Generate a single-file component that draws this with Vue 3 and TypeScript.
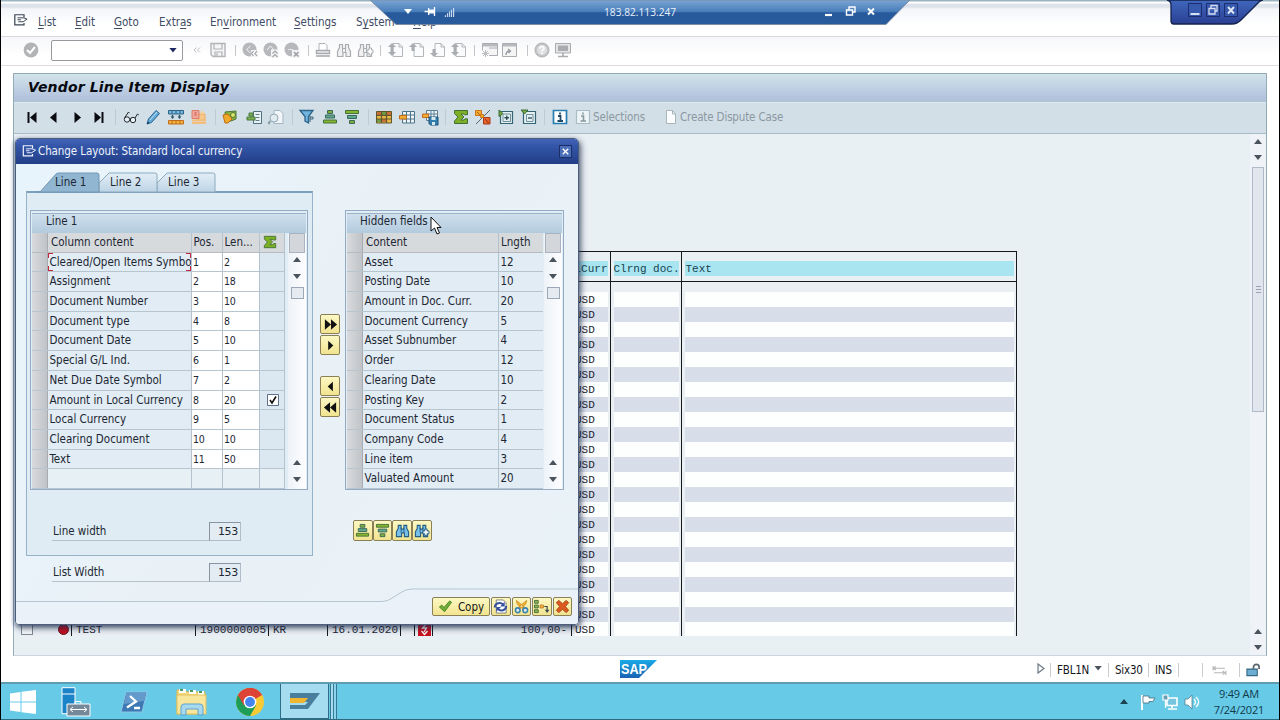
<script setup lang="ts">
interface MenuItem { before: string; key: string; after: string }
interface FieldRow { name: string; pos: string; len: string; sum?: boolean }

const menus: MenuItem[] = [
  { before: '', key: 'L', after: 'ist' },
  { before: '', key: 'E', after: 'dit' },
  { before: '', key: 'G', after: 'oto' },
  { before: 'Extr', key: 'a', after: 's' },
  { before: 'En', key: 'v', after: 'ironment' },
  { before: '', key: 'S', after: 'ettings' },
  { before: 'S', key: 'y', after: 'stem' },
  { before: '', key: 'H', after: 'elp' },
]

const page = '<path d="M5 1.5h6l3.500 3.500v9.500h-9.500z" fill="#fafbfc" stroke="#b4b6ba"/><path d="M11 1.500v3.500h3.500" fill="none" stroke="#b4b6ba"/>'
const upArrow = '<path d="M4 1l4 4H5.500v4h-3V5H0z" fill="#a9acb0"/>'
const downArrow = '<path d="M4 15l4-4H5.500V7h-3v4H0z" fill="#a9acb0"/>'
const upDown = '<path d="M4 1l4 4H5.500v5H8l-4 4-4-4h2.500V5H0z" fill="#a9acb0"/>'
const glass = (fill: string, stroke: string) =>
  `<path d="M1.500 14.500v-5l2-4v-3h3v3l.5 1h2l.5-1v-3h3v3l2 4v5h-4.500v-4h-3v4z" fill="${fill}" stroke="${stroke}" stroke-width="1.200"/><path d="M6.500 5v5m3-5v5" stroke="${stroke}"/>`
const ascending = '<path d="M5.500 1.500h5v3h-5z" fill="#7fae3c" stroke="#3c6a55"/><path d="M3.500 6h9v3h-9z" fill="#63a68e" stroke="#35695c"/><path d="M1.500 11h13v3h-13z" fill="#86b52f" stroke="#44703a"/>'
const descending = '<path d="M1.500 1.500h13v3h-13z" fill="#86b52f" stroke="#44703a"/><path d="M3.500 6.500h9v3h-9z" fill="#63a68e" stroke="#35695c"/><path d="M5.500 11.500h5v3h-5z" fill="#7fae3c" stroke="#3c6a55"/>'

const icons: Record<string, string> = {
  sep: '<path d="M8.500 3v11" stroke="#c3c7cc"/>',
  sep2: '<path d="M8.500 0v16" stroke="#bdcbd6"/>',
  ok: '<circle cx="8" cy="8" r="7.400" fill="#b1b3b5"/><path d="M4 8l3 3 5-6" fill="none" stroke="#fff" stroke-width="2"/>',
  chevrons: '<path d="M7.500 5.500L5 8l2.500 2.500m3.500-5L8.500 8l2.500 2.500" fill="none" stroke="#c0c2c7"/>',
  save: '<path d="M1 1.500h14v13H3l-2-2z" fill="#f5f5f6" stroke="#b2b4b8" stroke-width="1.400"/><path d="M4 2v5h8V2M5 14v-4h7v4M7 11v3" fill="none" stroke="#b2b4b8" stroke-width="1.200"/>',
  back: '<circle cx="7.500" cy="7.500" r="7" fill="#b6b8bb"/><path d="M8.500 4l-4 3.500 4 3.500" fill="none" stroke="#f4f4f4"/><path d="M9 8h7v7H9z" fill="#f4f4f4"/><path d="M11.500 9l-2 2.500 2 2.500m3.500-5l-2 2.500 2 2.500" fill="none" stroke="#9fa1a6" stroke-width="1.200"/>',
  exit: '<circle cx="7.500" cy="7.500" r="7" fill="#b6b8bb"/><path d="M4 8l3.500-4 3.500 4" fill="none" stroke="#f4f4f4"/><path d="M8 7.500h8V16H8z" fill="#f4f4f4"/><path d="M9.500 11.500l2.500-2.500 2.500 2.500m-5 3.500l2.500-2.500 2.500 2.500" fill="none" stroke="#9fa1a6" stroke-width="1.200"/>',
  cancel: '<circle cx="7.500" cy="7.500" r="7" fill="#b6b8bb"/><path d="M4 7.500h5" stroke="#e8e8e8"/><path d="M8 8h8v8H8z" fill="#f4f4f4"/><path d="M10 10l4.500 4.500m0-4.500L10 14.500" stroke="#9fa1a6" stroke-width="1.700"/>',
  print: '<path d="M4 8V1.500h6l2 2V8" fill="#fff" stroke="#b0b2b6"/><path d="M1.500 8.500h13v3h-13z" fill="#e9eaeb" stroke="#a8aaae" stroke-width="1.400"/><path d="M1 14h14" stroke="#a8aaae" stroke-width="1.600"/>',
  find: glass('#f0f0f1', '#aaadb1'),
  findNext: glass('#f0f0f1', '#aaadb1') + '<path d="M10 8h2V6h2.500v2h1.500v3h-1.500v2H12v-2h-2z" fill="#fff" stroke="#aaadb1"/>',
  first: page + upDown,
  prev: page + upArrow,
  next: page + downArrow,
  last: page + upDown,
  session: '<path d="M.5 1.500h15v12H7m-6.500-5v-7" fill="#f5f5f6" stroke="#a9acb0"/><path d="M1 2h14v2.500H1z" fill="#b7b9bd"/><path d="M7 6h8" stroke="#a9acb0"/><path d="M3.500 8v7M0 11.500h7M1 9l5 5m0-5l-5 5" stroke="#bbbdc0"/>',
  shortcut: '<path d="M.5 1.500h14v13H.5z" fill="#f5f5f6" stroke="#a9acb0"/><path d="M1 2h13v2.500H1z" fill="#b7b9bd"/><path d="M4 13c0-3 1-4 4-4M6 7l2.500 2L6.500 11" fill="none" stroke="#999ca2" stroke-width="1.300"/>',
  help: '<circle cx="8" cy="8" r="7" fill="#c2c4c6" stroke="#aeb0b4"/><circle cx="8" cy="8" r="5" fill="#dfe0e1"/><path d="M6 6.500c0-3 4.500-2.500 4 0-.3 1.300-2 1.300-2 3m0 1v1.500" fill="none" stroke="#fff" stroke-width="1.600"/>',
  monitor: '<path d="M.5 1.500h15v9.500H.5z" fill="#e4e5e6" stroke="#aaacb0"/><path d="M3 3.500h10V9H3z" fill="#a9abaf"/><path d="M8 11v3M3 14.500h10" stroke="#aaacb0" stroke-width="1.700"/>',
  toFirst: '<path d="M4.500 3v11" stroke="#0a0c12" stroke-width="2"/><path d="M12.500 3v11L6 8.500z" fill="#0a0c12"/>',
  toPrev: '<path d="M10.500 3v11L4 8.500z" fill="#0a0c12"/>',
  toNext: '<path d="M5.500 3v11L12 8.500z" fill="#0a0c12"/>',
  toLast: '<path d="M11.500 3v11" stroke="#0a0c12" stroke-width="2"/><path d="M3.500 3v11L10 8.500z" fill="#0a0c12"/>',
  glasses: '<circle cx="4" cy="10.500" r="2.700" fill="#e9f1f5" stroke="#20292f"/><circle cx="10" cy="11" r="2.700" fill="#e9f1f5" stroke="#20292f"/><path d="M1.500 9l4-6 .8 1.200M7 10.500l.6-1M12 9l2.500-4 1.300 1" fill="none" stroke="#20292f"/>',
  pencil: '<path d="M2 15l1.500-5L11 1.500l3.500 3L6.500 13.500z" fill="#62a9d8" stroke="#27638f"/><path d="M5 11l7-8" stroke="#c5e2f4"/><path d="M2 15l.8-2.500L4.500 14z" fill="#15354e"/>',
  detail: '<path d="M.5 1.500h15v3.500H.5z" fill="#7db7d8" stroke="#28638c"/><path d="M4 1.500V5m4-3.500V5m4-3.500V5" stroke="#28638c"/><path d="M4.500 6v3m7-3v3" stroke="#33576f" stroke-width="1.500"/><path d="M2.500 7.500h4l-2 2.500zm7 0h4l-2 2.500z" fill="#33576f"/><path d="M.5 11.500h15V15H.5z" fill="#f0b23c" stroke="#c26d1a"/><path d="M4 11.500V15m4-3.500V15m4-3.500V15" stroke="#c26d1a"/>',
  paste: '<path d="M6 5h8v6H6z" fill="#f6c98b" stroke="#f0ac60"/><path d="M1 1.500h7v8H1z" fill="#eda79c" stroke="#df7c6b"/><path d="M3.500 4h2M3.500 6h2" stroke="#c94f3a"/><path d="M1 11.500h14M1 14h14" stroke="#f3bd7c" stroke-width="2"/><path d="M11 1l3 4h-5z" fill="#f6ce97"/>',
  block: '<path d="M3 3l11-1v8l-5 2H4z" fill="#8bb63a" stroke="#4b7838"/><circle cx="11" cy="6" r="2.500" fill="#dbe46a" stroke="#4d7539"/><path d="M1 6l5-1 4 5-4 4H3z" fill="#f0a929" stroke="#bd6c15"/>',
  clip: '<path d="M7.500 2.500h8v12h-8z" fill="#eaf2f4" stroke="#51707f"/><path d="M9.500 5.500h4m-4 3h4m-4 3h4" stroke="#61808d"/><path d="M1 8h8v3H1zM3 4h4v3H3z" fill="#80b14b" stroke="#477842"/>',
  preview: '<path d="M6 1.500h6l3 3v10H6z" fill="#f1f5f7" stroke="#a4b7c1"/><circle cx="6" cy="9" r="4" fill="#dfebf1" stroke="#94a9b5"/><path d="M2 12l-1.500 3" stroke="#8298a4" stroke-width="2"/>',
  filter: '<path d="M1 1.500h13l-4.500 6v6.500L6 12V7.500z" fill="#70b5df" stroke="#2b6389" stroke-width="1.300"/><path d="M11 7v6m0-5h3v2h-3" fill="none" stroke="#37637c"/>',
  asc: ascending,
  desc: descending,
  grid: '<path d="M.5 2.500h15v11.500H.5z" fill="#e8b844" stroke="#61562e"/><path d="M1 3h4v3H1zm10 0h4v3h-4zM6 10h4v3H6z" fill="#cb7139"/><path d="M6 3h4v3H6zM1 10h4v3H1z" fill="#6f9e48"/><path d="M.5 6.300h15m-15 3.700h15m-10-7.500V14m5-11.500V14" stroke="#61562e" stroke-width="1.200"/>',
  grid2: '<path d="M3.500 2.500h12v11.500h-12z" fill="#eff5f7" stroke="#4d7489"/><path d="M3.500 6h12m-12 4h12m-8-7.500V14m4-11.500V14" stroke="#4d7489"/><path d="M.5 6.500h7v3.500h-7z" fill="#f0ad36" stroke="#c26a1b"/>',
  gridSave: '<path d="M4.500 1.500h11v10h-11z" fill="#eff5f7" stroke="#5b7f95"/><path d="M4.500 5h11m-11 3.500h11M9 1.500v10m3-10v10" stroke="#5b7f95"/><path d="M.5 5h6v3.500h-6z" fill="#f0ad36" stroke="#c26a1b"/><path d="M7 8h9v8H8.500L7 14.500z" fill="#317fae" stroke="#1b5276"/><path d="M9.500 8h4v3h-4zM10 13h3v3h-3z" fill="#d9e9f1"/>',
  sigma: '<path d="M1.500 1.500h13v4.200h-3L10.500 5H8l3 3-3.200 3H11l1-1.200h2.500v4.700h-13V12L5 8.100 1.500 4.500z" fill="#7eaf25" stroke="#3e6f36"/>',
  percent: '<path d="M.5 1.500h6v5h-6z" fill="#f3ad2e" stroke="#ca7318"/><path d="M2 3l3 3" stroke="#b85a16"/><path d="M1 15L15 1" stroke="#58666c"/><path d="M8.500 8.500h6.500V15H8.500z" fill="#e6672d" stroke="#a63816"/><path d="M10 10l3.500 4" stroke="#8c2810"/><path d="M5.500 5.500h3v3h-3z" fill="#f3ad2e" stroke="#ca7318"/>',
  plusBox: '<path d="M2.500 2.500h12v12h-12z" fill="#e4eff0" stroke="#356575" stroke-width="1.200"/><path d="M5 5h7.500v7.500H5z" fill="none" stroke="#6f929e"/><path d="M6.500 8.750h4.500M8.750 6.500v4.500" stroke="#284c5a" stroke-width="1.300"/><path d="M1 1l4 3.500-4 3z" fill="#76a93c" stroke="#3a6b3c"/>',
  minusBox: '<path d="M2.500 2.500h12v12h-12z" fill="#e4eff0" stroke="#356575" stroke-width="1.200"/><path d="M5.500 5.500h6.500v7H5.500z" fill="none" stroke="#6f929e"/><path d="M7 9h4" stroke="#284c5a" stroke-width="1.300"/><path d="M0 1h7L3.500 5z" fill="#76a93c" stroke="#3a6b3c"/>',
  info: '<path d="M1.500 1.500h13v13h-13z" fill="#fff" stroke="#267eaf" stroke-width="1.700"/><path d="M6 7h2.500v5m-3 0h5.500M8 3.500v2" fill="none" stroke="#214968" stroke-width="1.800"/>',
  infoGrey: '<path d="M1.500 1.500h13v13h-13z" fill="#eef4f6" stroke="#a9bcc5" stroke-width="1.200"/><path d="M6 7h2.500v5m-3 0h5.500M8 3.500v2" fill="none" stroke="#8798a1" stroke-width="1.600"/>',
  sheet: '<path d="M3.500 1.500h6l3 3.500v9.500h-9z" fill="#fbfcfd" stroke="#aab4bb"/><path d="M9.500 1.500V5h3" fill="none" stroke="#aab4bb"/>',
  window: '<path d="M12 5V2H1.500v11.500H12v-2" fill="none" stroke="currentColor" stroke-width="1.400"/><path d="M4.500 5.500h7L15.500 7 11 10H5.500M4.500 7.700h4" fill="none" stroke="currentColor" stroke-width="1.100"/>',
  dRight: '<path d="M2 2.500v11L8.500 8zM8.500 2.500v11L15 8z" fill="#111"/>',
  right: '<path d="M5.500 3v10L11 8z" fill="#111"/>',
  left: '<path d="M10.500 3v10L5 8z" fill="#111"/>',
  dLeft: '<path d="M14 2.500v11L7.500 8zM7.500 2.500v11L1 8z" fill="#111"/>',
  glassBlue: glass('#77bfe8', '#245e85'),
  glassPlus: glass('#77bfe8', '#245e85') + '<path d="M9.500 8.500h2v-2h2.500v2h2v3h-2v2h-2.500v-2h-2z" fill="#f0f6fa" stroke="#245e85"/>',
  tick: '<path d="M1.500 8.500l2.500-2L6.500 9l6-7 2 1.500-7.500 10z" fill="#71ae36" stroke="#488227"/>',
  refresh: '<path d="M3.500 1h7.500l3 3v11H3.500z" fill="#fff" stroke="#7b7e7b"/><path d="M2 9c0-5 6-6 9-3M14 7.500c0 5-6 6-9 3" fill="none" stroke="#36519d" stroke-width="2.200"/><path d="M12.500 3v5H7.500zM3.500 13.500v-5h5z" fill="#36519d"/>',
  scissors: '<path d="M2.500 1.500l1 4L9 10l2-1.500zM13.500 1.500l-1 4L7 10 5 8.500z" fill="#f4b832" stroke="#c7811d" stroke-width=".8"/><circle cx="4" cy="12" r="2.500" fill="#dcedf3" stroke="#3e83ac" stroke-width="1.700"/><circle cx="12" cy="12" r="2.500" fill="#dcedf3" stroke="#3e83ac" stroke-width="1.700"/>',
  tree: '<path d="M.5 1.500h4v3h-4zm0 5h4v3h-4zm0 5h4v3h-4z" fill="#91b94e" stroke="#446c3b"/><path d="M6.500 6.500H10v3H6.500z" fill="#f4bf49" stroke="#bf7928"/><path d="M11 8h3v5" fill="none" stroke="#3d4b50" stroke-width="1.300"/><path d="M11.500 11.500h5L14 15z" fill="#3d4b50"/>',
  cross: '<path d="M1.500 4L4 1.500 8 5l4-3.500L14.500 4 11 8l3.500 4-2.500 2.500L8 11l-4 3.500L1.500 12 5 8z" fill="#dc5a20" stroke="#a83b16"/>',
  xWhite: '<path d="M4 4l8 8m0-8l-8 8" stroke="#fff" stroke-width="2"/>',
}

const systemBar: string[] = ['save', 'sep', 'back', 'exit', 'cancel', 'sep', 'print', 'find', 'findNext', 'sep', 'first', 'prev', 'next', 'last', 'sep', 'session', 'shortcut', 'sep', 'help', 'monitor']
const appBar: string[] = ['toFirst', 'toPrev', 'toNext', 'toLast', 'sep2', 'glasses', 'pencil', 'detail', 'paste', 'sep2', 'block', 'clip', 'preview', 'sep2', 'filter', 'asc', 'desc', 'sep2', 'grid', 'grid2', 'gridSave', 'sep2', 'sigma', 'percent', 'plusBox', 'minusBox', 'sep2', 'info']

const shown: FieldRow[] = [
  { name: 'Cleared/Open Items Symbo', pos: '1', len: '2' },
  { name: 'Assignment', pos: '2', len: '18' },
  { name: 'Document Number', pos: '3', len: '10' },
  { name: 'Document type', pos: '4', len: '8' },
  { name: 'Document Date', pos: '5', len: '10' },
  { name: 'Special G/L Ind.', pos: '6', len: '1' },
  { name: 'Net Due Date Symbol', pos: '7', len: '2' },
  { name: 'Amount in Local Currency', pos: '8', len: '20', sum: true },
  { name: 'Local Currency', pos: '9', len: '5' },
  { name: 'Clearing Document', pos: '10', len: '10' },
  { name: 'Text', pos: '11', len: '50' },
  { name: '', pos: '', len: '' },
]

const hidden: [string, string][] = [
  ['Asset', '12'], ['Posting Date', '10'], ['Amount in Doc. Curr.', '20'], ['Document Currency', '5'],
  ['Asset Subnumber', '4'], ['Order', '12'], ['Clearing Date', '10'], ['Posting Key', '2'],
  ['Document Status', '1'], ['Company Code', '4'], ['Line item', '3'], ['Valuated Amount', '20'],
]
const rowCount = 23
</script>

<template>
  <div class="screen">
    <header class="menubar">
      <svg class="ic winicon" viewBox="0 0 16 16" v-html="icons.window" />
      <span v-for="m in menus" :key="m.key">{{ m.before }}<u>{{ m.key }}</u>{{ m.after }}</span>
    </header>

    <div class="sysbar">
      <svg class="ic" viewBox="0 0 16 16" v-html="icons.ok" />
      <div class="combo"><i class="tri-down navy" /></div>
      <svg class="ic" viewBox="0 0 16 16" v-html="icons.chevrons" />
      <svg v-for="(n, i) in systemBar" :key="i" class="ic" viewBox="0 0 16 16" v-html="icons[n]" />
    </div>

    <main class="work">
      <h1>Vendor Line Item Display</h1>
      <div class="appbar">
        <svg v-for="(n, i) in appBar" :key="i" class="ic" viewBox="0 0 16 16" v-html="icons[n]" />
        <span class="disabled"><svg class="ic" viewBox="0 0 16 16" v-html="icons.infoGrey" />Selections</span>
        <span class="disabled dispute"><svg class="ic" viewBox="0 0 16 16" v-html="icons.sheet" />Create Dispute Case</span>
      </div>
      <div class="content">
        <div class="list">
          <div class="lhead">
            <div class="lcell lead" />
            <div class="lcell"><b class="hl curr">LCurr</b></div>
            <div class="lcell"><b class="hl">Clrng doc.</b></div>
            <div class="lcell"><b class="hl text">Text</b></div>
          </div>
          <div class="lbody">
            <div v-for="r in rowCount" :key="r" class="lrow" :class="{ dark: r % 2 === 0 }">
              <div class="lcell lead">
                <template v-if="r === rowCount">
                  <i class="check" /><i class="dot" />
                  <span class="bar">TEST</span><span class="bar">1900000005</span><span class="bar">KR</span>
                  <span class="bar">16.01.2020</span><span class="bar" />
                  <span class="bar due"><svg viewBox="0 0 13 13"><path d="M0 0h13v13H0z" fill="#c9101f" /><path d="M8 1L4.500 5h4L6 9M3.500 8l3 3.500L9.500 8" fill="none" stroke="#fff" stroke-width="1.300" /></svg></span>
                  <span class="bar amount">100,00-</span>
                </template>
              </div>
              <div class="lcell"><span class="fill usd">USD</span></div>
              <div class="lcell"><span class="fill" /></div>
              <div class="lcell"><span class="fill" /></div>
            </div>
          </div>
        </div>
        <div class="scroll outer">
          <i class="tri-up" /><i class="tri-down" />
          <div class="thumb"><i v-for="n in 3" :key="n" class="grip"/></div>
          <span class="grow" />
          <i class="tri-up" /><i class="tri-down" />
        </div>
      </div>
    </main>

    <footer class="status">
      <svg class="sap" viewBox="0 0 37 18">
        <defs><linearGradient id="sapfill" x1="0" y1="0" x2="0" y2="1"><stop offset="0" stop-color="#1aaae6" /><stop offset="1" stop-color="#1a62b4" /></linearGradient></defs>
        <path d="M0 0h37L19 18H0z" fill="url(#sapfill)" />
        <text x="1" y="13.500" textLength="26" lengthAdjust="spacingAndGlyphs" font-family="Liberation Sans, sans-serif" font-weight="bold" font-size="14" fill="#fff">SAP</text>
      </svg>
      <div class="fields">
        <svg class="play" viewBox="0 0 8 11"><path d="M1 1l6 4.500L1 10z" fill="#fff" stroke="#6e7a86" stroke-width="1.200" /></svg>
        <span class="tcode">FBL1N<i class="tri-down" /></span>
        <span class="sys">Six30</span><span class="ins">INS</span><span class="gap" />
        <span class="swap"><svg viewBox="0 0 16 12"><path d="M1 1v5m1-2.500h12M4 1.500l-2.500 2L4 5.500M15 6v5M2 8.500h12m-2.500-2l2.500 2-2.500 2" fill="none" stroke="#b6b8bb" stroke-width="1.200" /></svg></span>
        <span class="lock"><svg viewBox="0 0 16 14"><path d="M8 6V4c0-4 6-4 6 0v2" fill="none" stroke="#5a646c" stroke-width="1.800" /><path d="M1 6h11v7H1z" fill="#6caed3" stroke="#386783" stroke-width="1.200" /></svg></span>
      </div>
    </footer>

    <nav class="taskbar">
      <svg class="start" viewBox="0 0 26 24"><path d="M0 3.500L10.500 2v9.500H0zM11.500 1.800L26 0v11.500H11.500zM0 12.500h10.500V22L0 20.500zM11.500 12.500H26V24l-14.500-1.800z" fill="#fff" /></svg>
      <svg class="server" viewBox="0 0 30 30"><path d="M1 .7h13v26H1z" fill="#1b83c8" stroke="#fff" /><path d="M1 7h13" stroke="#fff" /><path d="M6 17h23v12H6z" fill="#74889a" stroke="#fff" /><path d="M14 17v-2.500h6V17M9 22.500h17m-3-2.500l3 2.500-3 2.500M12 20l-3 2.500 3 2.500" fill="none" stroke="#fff" /></svg>
      <svg class="shell" viewBox="0 0 28 22"><path d="M6 1h21l-5 20H1z" fill="#3c78b4" stroke="#90c5e6" /><path d="M6.500 2H26l-2 8-20 3z" fill="#639acb" /><path d="M10 5l6 5.500-9 6M14 17h6" fill="none" stroke="#fff" stroke-width="2.300" /></svg>
      <svg class="files" viewBox="0 0 32 28"><path d="M1 2h8l2 2h18v22H1z" fill="#f4d97d" stroke="#dcb74e" /><path d="M3 1h7v4H3zm10 1h7v4h-7zm9 1h6v4h-6z" fill="#fff" /><path d="M4 2h3m7 1h3m6 1h3" stroke="#4a9a59" stroke-width="2" /><path d="M1 7h29v19H1z" fill="#f8e69c" stroke="#e0c261" /><path d="M5 27v-7c0-3 1-4 4-4h14c3 0 4 1 4 4v7h-5v-6H10v6z" fill="#a8d8ee" stroke="#5ba4ce" /></svg>
      <svg class="chrome" viewBox="0 0 28 28"><circle cx="14" cy="14" r="14" fill="#f6cb35" /><path d="M14 14L1.900 7A14 14 0 0 1 26.100 7z" fill="#dc4437" /><path d="M14 14L1.900 7A14 14 0 0 0 14 28l6-10.500z" fill="#1c9d58" /><path d="M14 7h12.100A14 14 0 0 0 1.900 7l6 10.500z" fill="#dc4437" /><circle cx="14" cy="14" r="6.300" fill="#fff" /><circle cx="14" cy="14" r="4.900" fill="#4384ee" /></svg>
      <div class="active"><svg viewBox="0 0 30 16"><path d="M0 0h30L18 16H0v-4h15l3-3H0z" fill="#4a7e9c" /><path d="M0 5h18l-4 5H0z" fill="#f0b62f" /></svg></div>
      <div class="stack" />
      <div class="tray">
        <i class="tri-up" />
        <svg viewBox="0 0 16 16"><path d="M2 1v15" stroke="#fff" stroke-width="2" /><path d="M3 2h6v2h6l-2 3.500H9V9H3z" fill="#fff" stroke="#456d7e" stroke-width=".8" /></svg>
        <svg viewBox="0 0 16 16"><path d="M5 4h10v7.500H5z" fill="#77c4df" stroke="#fff" stroke-width="1.600" /><path d="M10 12v2m-4 1h9" stroke="#fff" stroke-width="1.700" /><path d="M1 1h5v5H1zM3.500 6v8" fill="#679eb4" stroke="#fff" stroke-width="1.200" /></svg>
        <svg viewBox="0 0 16 16"><path d="M1 5h3l4-4v14l-4-4H1z" fill="#fff" stroke="#527d90" stroke-width=".8" /><path d="M10 5c2 2 2 4 0 6m2-8c3.500 3 3.500 7 0 10" fill="none" stroke="#fff" stroke-width="1.300" /></svg>
        <div class="clock"><span>9:49 AM</span><span>7/24/2021</span></div>
      </div>
    </nav>

    <section class="dialog">
      <div class="dtitle">
        <svg class="ic" viewBox="0 0 16 16" v-html="icons.window" />
        <span>Change Layout: Standard local currency</span>
        <i class="dclose"><svg viewBox="0 0 16 16" v-html="icons.xWhite" /></i>
      </div>
      <div class="dbody">
        <div class="left">
          <div class="tabs">
            <svg class="tabshape" viewBox="0 0 190 20">
              <defs><linearGradient id="tabfill" x1="0" y1="0" x2="0" y2="1"><stop offset="0" stop-color="#e3eef6" /><stop offset="1" stop-color="#bdd4e5" /></linearGradient></defs>
              <path d="M119 20v-9L129 1h46q2 0 2 2v17z" fill="url(#tabfill)" stroke="#8caabf" />
              <path d="M61 20v-9L71 1h46q2 0 2 2v17z" fill="url(#tabfill)" stroke="#8caabf" />
              <path d="M0 20h2L18 2q1-1 3-1h38q2 0 2 2v17z" fill="#91b6d2" stroke="#7397b1" />
            </svg>
            <div class="tablabels"><span>Line 1</span><span>Line 2</span><span>Line 3</span></div>
          </div>
          <div class="panel">
            <div class="grid shown">
              <div class="gtitle">Line 1</div>
              <div class="gmain">
                <div class="rows">
                  <div class="row head"><i class="sel" /><span>Column content</span><span>Pos.</span><span>Len...</span><span><svg class="ic sg" viewBox="0 0 16 16" v-html="icons.sigma" /></span></div>
                  <div v-for="(f, i) in shown" :key="i" class="row" :class="{ empty: !f.name, focus: i === 0 }">
                    <i class="sel" /><span class="name">{{ f.name }}</span><span class="num">{{ f.pos }}</span><span class="num">{{ f.len }}</span>
                    <span class="tot"><svg v-if="f.sum" viewBox="0 0 12 12"><path d="M.5.5h11v11H.5z" fill="#fff" stroke="#5d7286" /><path d="M3 6l2 3 4-6.500" fill="none" stroke="#111" stroke-width="1.600" /></svg></span>
                  </div>
                </div>
                <div class="scroll inner">
                  <i class="cfg" /><i class="tri-up" /><i class="tri-down" /><i class="knob" /><span class="grow" /><i class="tri-up" /><i class="tri-down" />
                </div>
              </div>
            </div>
            <div class="width"><label>Line width</label><output>153</output></div>
          </div>
          <div class="width total"><label>List Width</label><output>153</output></div>
        </div>
        <div class="move">
          <button><svg viewBox="0 0 16 16" v-html="icons.dRight" /></button>
          <button><svg viewBox="0 0 16 16" v-html="icons.right" /></button>
          <button class="below"><svg viewBox="0 0 16 16" v-html="icons.left" /></button>
          <button><svg viewBox="0 0 16 16" v-html="icons.dLeft" /></button>
        </div>
        <div class="rightcol">
          <div class="grid hid">
            <div class="gtitle">Hidden fields</div>
            <div class="gmain">
              <div class="rows">
                <div class="row head"><i class="sel" /><span>Content</span><span>Lngth</span></div>
                <div v-for="h in hidden" :key="h[0]" class="row"><i class="sel" /><span class="name">{{ h[0] }}</span><span class="name">{{ h[1] }}</span></div>
              </div>
              <div class="scroll inner">
                <i class="cfg" /><i class="tri-up" /><i class="tri-down" /><i class="knob" /><span class="grow" /><i class="tri-up" /><i class="tri-down" />
              </div>
            </div>
          </div>
          <div class="tools">
            <button v-for="n in ['asc', 'desc', 'glassBlue', 'glassPlus']" :key="n"><svg viewBox="0 0 16 16" v-html="icons[n]" /></button>
          </div>
        </div>
      </div>
      <div class="dfoot">
        <svg class="edge" viewBox="0 0 562 36"><path d="M0 13.500h366q6 0 11-4l8-5q5-3.500 11-3.500h166v35H0z" fill="#eaf1f8" /><path d="M0 13.500h366q6 0 11-4l8-5q5-3.500 11-3.500h166" fill="none" stroke="#b4c6d2" /></svg>
        <div class="actions">
          <button class="copy"><svg viewBox="0 0 16 16" v-html="icons.tick" />Copy</button>
          <button v-for="n in ['refresh', 'scissors', 'tree', 'cross']" :key="n"><svg viewBox="0 0 16 16" v-html="icons[n]" /></button>
        </div>
      </div>
    </section>

    <svg class="mouse" viewBox="0 0 12 19"><path d="M1 1v14l3.500-3 2.500 6 2.500-1-2.500-5.500H11z" fill="#fff" stroke="#111" /></svg>

    <div class="rdp">
      <svg class="rdpshape" viewBox="0 0 546 26" preserveAspectRatio="none">
        <defs><linearGradient id="rdpfill" x1="0" y1="0" x2="0" y2="1"><stop offset="0" stop-color="#7ba4d4" /><stop offset=".48" stop-color="#477db9" /><stop offset=".52" stop-color="#27599c" /><stop offset="1" stop-color="#285c9b" /></linearGradient></defs>
        <path d="M2 0h540l-24 24.500H28z" fill="url(#rdpfill)" stroke="#78889c" stroke-width=".8" />
      </svg>
      <div class="rdpbar">
        <i class="tri-down" />
        <svg class="pin" viewBox="0 0 12 10"><path d="M0 5h5M4.500 1v8M11 0v10M5 3.500h6v3H5z" fill="#fff" stroke="#fff" stroke-width="1.500" /></svg>
        <svg class="signal" viewBox="0 0 11 11"><path d="M1 9v2m2.300-4v4m2.200-6v6m2.200-8v8M10 1v10" stroke="#c8d9ed" stroke-width="1.300" /></svg>
        <span>183.82.113.247</span>
        <svg class="rctl" viewBox="0 0 50 12"><path d="M1 9h7" stroke="#fff" stroke-width="2.200" /><path d="M25 3.500V1h6v5h-2M22.500 4h6v5h-6z" fill="none" stroke="#fff" stroke-width="1.400" /><path d="M44 2.500l6 6m0-6l-6 6" stroke="#fff" stroke-width="1.900" /></svg>
      </div>
    </div>

    <svg class="corner" viewBox="0 0 96 28">
      <defs><linearGradient id="cornerfill" x1="0" y1="0" x2="0" y2="1"><stop offset="0" stop-color="#3f67bd" /><stop offset="1" stop-color="#2a3f92" /></linearGradient></defs>
      <path d="M0 0q4 1 4 5v16q0 3 3 3h58q5 0 9-4L92 2q2-2 4-2z" fill="url(#cornerfill)" stroke="#14224f" stroke-width="1.300" />
      <path d="M21.500 3.500h13v13h-13zm18 0h13v13h-13zm18 0h13v13h-13z" fill="#3659ad" stroke="#1b2d6e" />
      <path d="M23.500 14h9" stroke="#d6def2" stroke-width="2" /><path d="M44 8V5.500h6V11h-2M42 8.500h6V14h-6z" fill="none" stroke="#d6def2" stroke-width="1.300" /><path d="M61 7l6 6.500m0-6.500l-6 6.500" stroke="#e3e8f6" stroke-width="1.900" />
    </svg>
  </div>
</template>

<style>
body { margin: 0; overflow: hidden; }
</style>

<style scoped>
* { box-sizing: border-box; }
.screen {
  position: relative; width: 1280px; height: 720px; overflow: hidden; display: flex; flex-direction: column;
  background: #fff; border-left: 1px solid #000; border-right: 1px solid #000;
  font-family: "DejaVu Sans Condensed", "DejaVu Sans", sans-serif; font-stretch: condensed; font-size: 11.500px; color: #1d2733;
  white-space: nowrap;
}
svg { display: block; overflow: visible; flex: none; }
i { display: block; flex: none; }
.ic { width: 16px; height: 16px; }
.tri-up, .tri-down { width: 8px; height: 5px; background: #4b535c; clip-path: polygon(50% 0, 100% 100%, 0 100%); }
.tri-down { clip-path: polygon(0 0, 100% 0, 50% 100%); }
.tri-down.navy { background: #1c2860; }
.grow { flex: 1; }

.menubar {
  height: 37px; flex: none; border-bottom: 1px solid #dcd9dc; padding: 8px 0 0 12px; color: #404b65;
  display: grid; grid-template-columns: 25px 37px 39px 45px 51px 84px 62px 57px 40px; align-items: center;
  background: linear-gradient(#9db3c0 0, #9db3c0 1px, #fff 2px, #fff 3px, #dfe4ec 4px, #dde2ea 7px, #f3f5f9 9px, #fff 24px);
}
.winicon { width: 15px; height: 14px; margin-top: -5px; color: #3c4555; }
.menubar u { text-underline-offset: 1.500px; }
.sysbar {
  height: 29px; flex: none; border-bottom: 1px solid #e2dcde; background: linear-gradient(#f6f7fa, #fff 70%);
  padding: 0 0 2px 22px; display: grid; align-items: center; justify-items: start;
  grid-template-columns: 28px 138px 21px 17px 15px 21px 21px 16px 15px 21px 21px 15px 16px 21px 21px 21px 15px 16px 20px 17px 15px 21px 16px;
}
.combo { width: 132px; height: 21px; border: 1px solid #969a9f; border-radius: 2px; background: #fff; display: flex; justify-content: flex-end; align-items: center; padding-right: 5px; }

.work { margin: 7px 12px 0 12px; height: 583px; flex: none; border: 1px solid #91abb9; border-bottom-color: #cbd6de; background: #e9f0f4; display: flex; flex-direction: column; }
h1 { margin: 0; height: 28px; flex: none; padding-left: 14px; font: italic bold 14px/26px "DejaVu Sans", sans-serif; font-stretch: normal; letter-spacing: .15px; color: #06090f; background: linear-gradient(#d2e3ea, #b3c3de 85%, #aec3d6); }
.appbar {
  height: 32px; flex: none; background: #d3dfe7; border-top: 1px solid #e1eaf0; border-bottom: 1px solid #a7bbc8; padding: 0 0 2px 10px;
  display: grid; align-items: center; justify-items: start;
  grid-template-columns: 22px 23px 22px 16px 16px 22px 23px 23px 16px 15px 24px 22px 16px 15px 23px 22px 16px 16px 23px 23px 15px 16px 22px 23px 23px 15px 16px 23px 88px 130px;
}
.disabled { display: flex; align-items: center; gap: 2px; color: #8a98a2; letter-spacing: -.1px; }
.dispute { gap: 1px; letter-spacing: -.15px; }
.content { flex: 1; min-height: 0; display: flex; justify-content: space-between; }

.list { margin: 117px 0 0 5px; width: 998px; height: 385px; overflow: hidden; border-top: 1.500px solid #15191c; font: 11px/15px "Liberation Mono", monospace; color: #1b2430; }
.lhead, .lrow { display: grid; grid-template-columns: 553px 38.500px 71px 335.500px; }
.lcell { border-right: 1.500px solid #15191c; padding: 0 2px 0 3px; min-width: 0; }
.lhead { height: 30px; border-bottom: 1.500px solid #15191c; }
.lhead .lcell { padding-top: 9px; }
.hl { display: block; height: 15px; background: #a8e5f0; font-weight: normal; color: #174450; line-height: 17px; }
.hl.text { padding-left: 1px; }
.curr { direction: rtl; }
.lbody { background: #e9eff3; }
.lrow { height: 15px; }
.lrow:first-child { height: 25px; }
.lrow:first-child .lcell { padding-top: 10px; }
.fill { display: block; height: 15px; background: #fdfefe; line-height: 16px; }
.dark .fill { background: #d7deea; }
.lead { display: grid; grid-template-columns: 39px 13px 124px 73px 59px 73px 14px 18px 138px; align-items: center; }
.lhead .lead { padding: 0; }
.lead.lcell { padding-right: 0; padding-left: 0; }
.check { width: 12px; height: 11px; border: 1px solid #7d8a95; margin-left: 2px; background: #f4f7f9; }
.dot { width: 11px; height: 11px; border-radius: 50%; background: #c40f1f; border: 1px solid #631018; }
.bar { height: 15px; line-height: 16px; border-left: 1.500px solid #15191c; padding-left: 4px; }
.due { padding-left: 3px; }
.due svg { width: 13px; height: 13px; margin-top: 1px; }
.amount { text-align: right; padding-right: 3px; }
.scroll { display: flex; flex-direction: column; align-items: center; }
.outer { width: 16px; padding: 5px 0; gap: 11px; background: #eff3f7; }
.thumb { width: 12px; height: 245px; margin-top: -4px; background: #e1e6ee; border: 1px solid #b0b9c8; display: flex; flex-direction: column; gap: 2px; align-items: center; justify-content: center; }
.grip { width: 5px; height: 1px; background: #9aa3b3; }

.status { height: 26px; flex: none; display: flex; align-items: center; color: #14181c; }
.sap { width: 37px; height: 18px; margin: -1px 0 0 619px; }
.fields { display: flex; align-items: center; margin-left: 380px; height: 14px; margin-top: 2px; }
.fields > span { border-left: 1px solid #c9cdd1; height: 14px; padding-left: 6px; display: flex; align-items: center; letter-spacing: -.2px; }
.play { width: 8px; height: 11px; margin-right: 5px; margin-top: -3px; }
.tcode { width: 58px; gap: 5px; }
.tcode i { margin-top: -4px; }
.sys { width: 40px; }
.ins { width: 30px; }
.gap { width: 24px; }
.swap { width: 37px; }
.swap svg { width: 15px; height: 11px; margin-left: 3px; }
.lock svg { width: 15px; height: 14px; }

.taskbar { flex: 1; border-top: 2px solid #5e9cb1; border-bottom: 1px solid #2e6b80; background: #67cbe8; display: flex; align-items: center; }
.start { width: 26px; height: 24px; margin-left: 9px; }
.server { width: 30px; height: 30px; margin-left: 25px; }
.shell { width: 28px; height: 22px; margin-left: 29px; }
.files { width: 32px; height: 28px; margin-left: 28px; }
.chrome { width: 28px; height: 28px; margin-left: 28px; }
.active { width: 49px; height: 100%; margin-left: 16px; background: #a6dcf0; border: 1px solid #2f6d87; border-top: 0; display: flex; align-items: center; justify-content: center; }
.active svg { width: 30px; height: 16px; }
.stack { width: 7px; height: 100%; border: solid #367791; border-width: 0 1px; margin-left: 1px; background: linear-gradient(90deg, #a6dcf0 2px, #367791 2px, #367791 3px, #8bd4ec 3px); }
.tray { margin-left: auto; display: flex; align-items: center; padding-right: 9px; }
.tray svg { width: 16px; height: 16px; margin-left: 6px; }
.tray .tri-up { background: #1c4351; margin-right: 6px; }
.clock { width: 62px; margin-left: 8px; display: flex; flex-direction: column; align-items: center; font: 11px/16px "Open Sans", sans-serif; letter-spacing: -.2px; color: #113949; }

.dialog {
  position: absolute; left: 14px; top: 138px; width: 564px; height: 487px; border: 1px solid #4c5e7c; border-radius: 5px 5px 4px 4px; overflow: hidden;
  background: linear-gradient(120deg, #e8f4fc, #e9f1f6 50%, #e9f2f8); box-shadow: 2px 3px 6px rgba(20, 30, 60, .65), -1px 1px 4px rgba(60, 80, 130, .5);
  display: flex; flex-direction: column;
}
.dtitle { height: 25px; flex: none; background: linear-gradient(#4363b7, #3557aa 25%, #213d86); color: #eef3fc; display: flex; align-items: center; gap: 2px; padding: 0 6px 1px 6px; letter-spacing: -.09px; }
.dtitle .ic { width: 14px; height: 14px; }
.dclose { margin-left: auto; width: 13px; height: 13px; border: 1px solid #1e2f66; background: #4a6fb8; }
.dclose svg { width: 11px; height: 11px; }
.dbody { height: 424px; flex: none; display: flex; align-items: flex-start; }
.left { width: 287px; margin: 8px 0 0 10px; }
.tabs { height: 19px; display: grid; }
.tabs > * { grid-area: 1 / 1; }
.tabshape { width: 190px; height: 20px; margin-left: 12px; }
.tablabels { display: grid; grid-template-columns: 55px 58px 60px; padding: 3px 0 0 29px; z-index: 1; }
.panel { height: 365px; border: 1px solid #96b2c9; border-top: 2px solid #7c9fba; background: #dfecf4; padding: 17px 4px 0 3px; }
.grid { height: 280px; border: 1px solid #93abc5; padding: 2px 1px 0; background: #e0edf5; }
.gtitle { height: 20px; background: linear-gradient(#cfdfed, #b3cbde); border-top: 1px solid #9ab1c6; padding-left: 14px; line-height: 15px; }
.gmain { display: flex; justify-content: space-between; height: 256px; }
.row { display: grid; height: 19.700px; line-height: 19px; border-bottom: 1px solid #b7c5cf; background: #e1ecf4; }
.row.head { background: #d7dadd; border-color: #b7bbc0; }
.row.head span { padding-left: 3px; }
.row.head .sel + span ~ span { padding-left: 2px; }
.row > span { border-right: 1px solid #b3c2cd; padding-left: 1.500px; min-width: 0; overflow: hidden; }
.sel { background: linear-gradient(90deg, #d8dadd, #c0c3c7); border-right: 1px solid #a8acb0; }
.shown .row { grid-template-columns: 16px 143.500px 31px 37px 25px; }
.hid .row { grid-template-columns: 16px 136px 44px; }
.hid .row > span:last-child { border-right: 0; }
.row .num { background: #fff; font-family: "DejaVu Sans", sans-serif; font-size: 10.500px; letter-spacing: -.3px; }
.row .tot { background: #dbe8f1; }
.tot svg { width: 12px; height: 12px; margin: 3px 0 0 6px; }
.row.empty > span { background: #e7f0f5; }
.row.focus .name { background: linear-gradient(#c4273c, #c4273c) 0 0 / 5px 1px no-repeat, linear-gradient(#c4273c, #c4273c) 0 0 / 1px 5px no-repeat, linear-gradient(#c4273c, #c4273c) 100% 0 / 5px 1px no-repeat, linear-gradient(#c4273c, #c4273c) 100% 0 / 1px 5px no-repeat, linear-gradient(#c4273c, #c4273c) 0 100% / 5px 1px no-repeat, linear-gradient(#c4273c, #c4273c) 0 100% / 1px 5px no-repeat, linear-gradient(#c4273c, #c4273c) 100% 100% / 5px 1px no-repeat, linear-gradient(#c4273c, #c4273c) 100% 100% / 1px 5px no-repeat; }
.sg { width: 14px; height: 14px; margin: 2px 0 0 1px; }
.inner { width: 18px; background: linear-gradient(90deg, #eef3f8, #fdfdff); padding-bottom: 7px; gap: 12px; }
.cfg { width: 16px; height: 20px; background: #d3d7dc; border: 1px solid #a9b3bf; margin-bottom: -8px; }
.knob { width: 13px; height: 12px; border: 1px solid #9ca8b8; background: #e6ebf2; margin-top: -4px; }
.width { display: flex; margin: 32px 0 0 22px; width: 189px; height: 19px; line-height: 19px; }
.width label { flex: 1; border-bottom: 1px solid #b3c2cb; padding-left: 1px; }
.width output { width: 32px; border: 1px solid #b0bcc8; border-top-color: #8795a3; border-left-color: #8795a3; background: #e3ecf2; text-align: right; padding-right: 2px; font: 11px/17px "DejaVu Sans", sans-serif; letter-spacing: -.3px; }
.width.total { margin: 7px 0 0 26px; }
.move { margin: 150px 0 0 7px; display: flex; flex-direction: column; gap: 1px; }
button { width: 20px; height: 20px; padding: 0; border: 1px solid #8b7f55; border-radius: 2px; background: linear-gradient(#fdf8c4, #f1e48f); display: flex; align-items: center; justify-content: center; font: inherit; color: #14181c; }
button svg { width: 15px; height: 15px; }
.below { margin-top: 20px; }
.rightcol { margin: 46px 0 0 5px; }
.hid { width: 219px; }
.hid .gtitle { padding-left: 13px; }
.tools { display: flex; margin: 30px 0 0 8px; }
.tools button { height: 21px; width: 19.700px; }
.dfoot { flex: 1; display: grid; }
.dfoot > * { grid-area: 1 / 1; }
.edge { width: 562px; height: 36px; }
.actions { z-index: 1; display: flex; gap: 1px; justify-content: flex-end; padding: 9px 6px 0 0; }
.actions button { height: 19px; width: 19.500px; }
.actions .copy { width: 58px; gap: 5px; }

.mouse { position: absolute; left: 429px; top: 216px; width: 12px; height: 19px; }
.rdp { position: absolute; left: 367px; top: 0; width: 546px; height: 26px; }
.rdpshape { position: absolute; left: 0; top: 0; width: 546px; height: 26px; }
.rdpbar { position: relative; height: 23px; display: flex; align-items: center; padding-left: 36px; color: #e9f1fb; font: 10.200px "Open Sans", sans-serif; }
.rdpbar .tri-down { background: #fff; }
.pin { width: 12px; height: 9px; margin-left: 12px; }
.signal { width: 11px; height: 10px; margin-left: 8px; }
.rdpbar span { margin-left: 149px; width: 72px; }
.rctl { width: 50px; height: 12px; margin-left: 148px; }
.corner { position: absolute; left: 1166px; top: 0; width: 96px; height: 28px; }
</style>
